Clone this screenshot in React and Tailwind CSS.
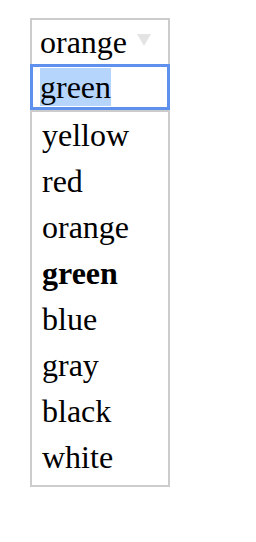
import React from 'react';

const colors = ['yellow', 'red', 'orange', 'green', 'blue', 'gray', 'black', 'white'];

export default function App() {
  const selected = 'green';

  return (
    <div className="min-h-[542px] bg-white pt-[18px] pl-[30px] font-['Liberation_Serif',serif] text-[32px] text-black">
      <div className="w-[140px]">
        {/* current value */}
        <div className="flex h-[46px] items-center border-2 border-b-0 border-[#cccccc] pl-[8px]">
          <span className="leading-[40px]">orange</span>
          <svg className="ml-[10px] mt-[-5px]" width="14" height="12" viewBox="0 0 14 12">
            <path d="M0 0 L14 0 L7 12 Z" fill="#e4e4e4" />
          </svg>
        </div>

        {/* search input */}
        <div className="flex h-[46px] items-center border-[3px] border-[#5e91ee] pl-[7px]">
          <span className="inline-block h-[38px] bg-[#b5d5fd] leading-[38px]">green</span>
        </div>

        {/* options */}
        <ul className="border-2 border-t-2 border-[#cccccc] pb-[5px]">
          {colors.map((c) => (
            <li
              key={c}
              className={`h-[46px] pl-[10px] leading-[46px] ${c === selected ? 'font-bold' : ''}`}
            >
              {c}
            </li>
          ))}
        </ul>
      </div>
    </div>
  );
}
